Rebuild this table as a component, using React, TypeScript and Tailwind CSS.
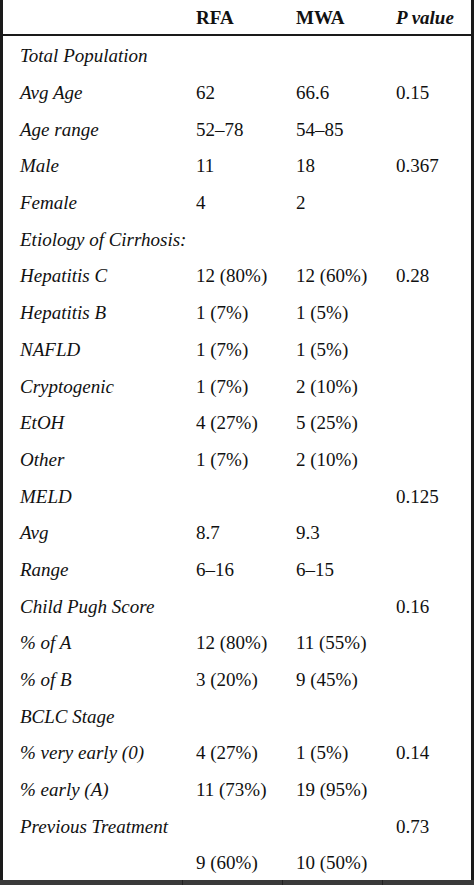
const rows: [string, string, string, string][] = [
  ["Total Population", "", "", ""],
  ["Avg Age", "62", "66.6", "0.15"],
  ["Age range", "52–78", "54–85", ""],
  ["Male", "11", "18", "0.367"],
  ["Female", "4", "2", ""],
  ["Etiology of Cirrhosis:", "", "", ""],
  ["Hepatitis C", "12 (80%)", "12 (60%)", "0.28"],
  ["Hepatitis B", "1 (7%)", "1 (5%)", ""],
  ["NAFLD", "1 (7%)", "1 (5%)", ""],
  ["Cryptogenic", "1 (7%)", "2 (10%)", ""],
  ["EtOH", "4 (27%)", "5 (25%)", ""],
  ["Other", "1 (7%)", "2 (10%)", ""],
  ["MELD", "", "", "0.125"],
  ["Avg", "8.7", "9.3", ""],
  ["Range", "6–16", "6–15", ""],
  ["Child Pugh Score", "", "", "0.16"],
  ["% of A", "12 (80%)", "11 (55%)", ""],
  ["% of B", "3 (20%)", "9 (45%)", ""],
  ["BCLC Stage", "", "", ""],
  ["% very early (0)", "4 (27%)", "1 (5%)", "0.14"],
  ["% early (A)", "11 (73%)", "19 (95%)", ""],
  ["Previous Treatment", "", "", "0.73"],
  ["", "9 (60%)", "10 (50%)", ""],
]

export default function App() {
  return (
    <div
      className="w-[474px] h-[885px] bg-white text-[#111] text-[19px] leading-none overflow-hidden"
      style={{ fontFamily: '"Liberation Serif", "Times New Roman", serif' }}
    >
      <div className="border-l-[3px] border-r-[3px] border-[#1a1a1a]">
        {/* Header */}
        <div className="grid grid-cols-[180px_100px_100px_88px] h-[36px] items-center border-b-[2px] border-[#1a1a1a] pt-[1px]">
          <div />
          <div className="pl-[13px] font-bold">RFA</div>
          <div className="pl-[13px] font-bold">MWA</div>
          <div className="pl-[13px] font-bold italic">P value</div>
        </div>

        {/* Body */}
        {rows.map((r, i) => (
          <div key={i} className="grid grid-cols-[180px_100px_100px_88px] h-[36.7px] items-center pt-[3px]">
            <div className="pl-[17px] italic whitespace-nowrap">{r[0]}</div>
            <div className="pl-[13px] whitespace-nowrap">{r[1]}</div>
            <div className="pl-[13px] whitespace-nowrap">{r[2]}</div>
            <div className="pl-[13px] whitespace-nowrap">{r[3]}</div>
          </div>
        ))}
      </div>

      {/* Bottom rule */}
      <div className="grid grid-cols-[183px_100px_100px_91px] h-[5px] bg-[#3a3a3a]">
        <div className="border-r border-[#222]" />
        <div className="border-r border-[#222]" />
        <div className="border-r border-[#222]" />
        <div />
      </div>
    </div>
  )
}
